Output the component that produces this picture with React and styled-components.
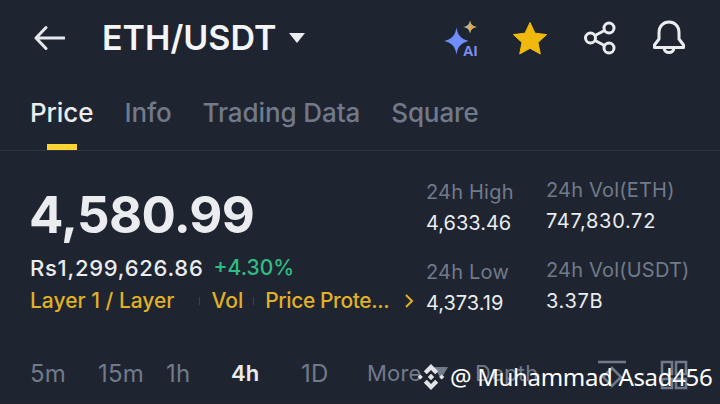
import React from 'react';
import styled, { createGlobalStyle } from 'styled-components';

const Global = createGlobalStyle`
  html, body { margin: 0; padding: 0; background: #1f2530; }
`;
const font = `"Inter", "Liberation Sans", sans-serif`;

const Page = styled.div`
  position: relative; width: 720px; height: 404px; overflow: hidden;
  background: #1f2530; font-family: ${font}; color: #eaecef;
`;
const Header = styled.header`
  display: flex; align-items: center; height: 75px; padding: 0 34px; box-sizing: border-box;
`;
const BackBtn = styled.div`display: flex; width: 68px; flex: none;`;
const Title = styled.h1`
  margin: 0; font-size: 34px; font-weight: 600; letter-spacing: 0; color: #f4f5f7; line-height: 1;
`;
const Caret = styled.svg`margin-left: 12px; flex: none;`;
const Actions = styled.div`
  margin-left: auto; display: flex; align-items: center; gap: 35px;
`;
const AiSvg = styled.svg`margin-right: -5px;`;
const Tabs = styled.nav`
  display: flex; gap: 31px; padding: 0 30px; height: 76px; box-sizing: border-box;
  border-bottom: 1px solid #2f3540;
`;
const Tab = styled.div`
  position: relative; font-size: 26px; line-height: 76px; height: 75px; letter-spacing: -0.1px;
  font-weight: 500; color: ${p => (p.$active ? '#eaecef' : '#717a8a')};
  ${p => p.$active && `
    &::after {
      content: ''; position: absolute; left: 17px; bottom: 0; width: 30px; height: 6px; background: #fcd535;
    }
  `}
`;
const Market = styled.section`
  display: grid; grid-template-columns: 396px 120px 1fr; padding: 0 0 0 30px; height: 198px;
`;
const PriceCol = styled.div`display: flex; flex-direction: column; width: 396px;`;
const BigPrice = styled.div`
  font-size: 51px; font-weight: 700; line-height: 60px; margin-top: 34px; color: #eaecef; letter-spacing: -0.7px; margin-left: -1px;
`;
const FiatRow = styled.div`
  display: flex; gap: 10px; margin-top: 10px; line-height: 26px; font-weight: 500;
`;
const Fiat = styled.span`color: #eaecef; font-size: 22px; letter-spacing: 0.75px;`;
const Change = styled.span`color: #2ebd85; font-size: 21px; letter-spacing: 0;`;
const TagRow = styled.div`
  display: flex; align-items: center; margin-top: 7px; color: #e0b128; font-size: 21px; line-height: 26px; font-weight: 500; white-space: nowrap;
`;
const Tag = styled.span`letter-spacing: ${p => p.$ls || 0}px;`;
const TagSep = styled.i`
  display: block; width: 1px; height: 8px; background: #3a404c; margin: 0 ${p => p.$m}px 0 ${p => p.$l}px;
`;
const Chevron = styled.svg`margin-left: 15px; flex: none;`;
const StatCol = styled.div`
  display: flex; flex-direction: column; padding-top: ${p => p.$top}px;
`;
const StatLabel = styled.div`
  font-size: 20px; line-height: 26px; color: #717a8a; white-space: nowrap; letter-spacing: 0.2px;
`;
const StatValue = styled.div`
  font-size: 20px; line-height: 26px; color: #eaecef; margin-top: 5px; margin-bottom: 23px; white-space: nowrap;
  letter-spacing: ${p => (p.$wide ? 0.7 : 0)}px;
`;
const Frames = styled.div`
  display: flex; align-items: center; height: 48px; padding-left: 30px; letter-spacing: 0.2px;
`;
const Frame = styled.span`
  display: flex; align-items: center; flex: none; width: ${p => p.$w}px; color: ${p => (p.$active ? '#eaecef' : '#717a8a')};
  font-weight: ${p => (p.$active ? 600 : 400)}; font-size: ${p => p.$size || 24}px;
`;
const MoreCaret = styled.svg`margin-left: 12px; flex: none;`;
const FrameIcons = styled.div`display: flex; align-items: center; gap: 33px; margin: 3px 0 0 32px;`;
const Watermark = styled.div`
  position: absolute; left: 417px; top: 362px; display: flex; align-items: center; gap: 5px;
  font-family: "Noto Sans", sans-serif; font-size: 24px; line-height: 30px; color: #fff; white-space: nowrap; letter-spacing: -0.33px;
`;

const Back = () => (
  <svg width="31" height="26" viewBox="0 0 31 26" fill="none" stroke="#e6e8ec" strokeWidth="3" strokeLinecap="round" strokeLinejoin="round">
    <path d="M2 13h28M12 2.500 2 13l10 10.500" />
  </svg>
);
const AiIcon = () => (
  <AiSvg width="40" height="38" viewBox="0 0 40 38">
    <path d="M14.500 8.500c1.500 8 4 11 12 13.500-8 2.500-10.500 5.500-12 13.500-1.500-8-4-11-12-13.500 8-2.500 10.500-5.500 12-13.500z" fill="#6f8dfb" />
    <path d="M28 1.500c.9 4.200 2.500 5.600 7 6.500-4.500.9-6.100 2.300-7 6.500-.9-4.200-2.500-5.600-7-6.500 4.500-.9 6.100-2.300 7-6.500z" fill="#b9b3a0" />
    <path d="M28 1.500c.9 4.200 2.500 5.600 7 6.500-4.500.9-6.100 2.300-7 6.500z" fill="#d9ab4c" />
    <text x="21" y="36.500" fontFamily="Liberation Sans, sans-serif" fontWeight="700" fontSize="14.500" fill="#7f8ff0">AI</text>
  </AiSvg>
);
const Star = () => (
  <svg width="36" height="34" viewBox="0 0 36 34">
    <path d="M18 1.500l5 10.700 11.600 1.400-8.600 7.900 2.300 11.400L18 27.300 7.700 33l2.300-11.500-8.600-7.900 11.600-1.400z" fill="#f0b90b" stroke="#f0b90b" strokeLinejoin="round" />
  </svg>
);
const Share = () => (
  <svg width="34" height="34" viewBox="0 0 34 34" fill="none" stroke="#eaecef" strokeWidth="3">
    <circle cx="7.500" cy="17" r="5" />
    <circle cx="26" cy="7" r="5" />
    <circle cx="26" cy="27" r="5" />
    <path d="M12 14.500l9.500-5M12 19.500l9.500 5" />
  </svg>
);
const Bell = () => (
  <svg width="34" height="36" viewBox="0 0 34 36" fill="none" stroke="#eaecef" strokeWidth="3" strokeLinejoin="round" strokeLinecap="round">
    <path d="M17 2c-6 0-10 4.500-10 10.500v6.500L2.500 25v2.500h29V25L27 19v-6.500C27 6.500 23 2 17 2z" />
    <path d="M12 28c.5 3 2.500 4.500 5 4.500s4.500-1.500 5-4.500" />
  </svg>
);
const BinanceMark = () => (
  <svg width="28" height="28" viewBox="0 0 28 28" fill="#e2e4e8">
    <path d="M14 1l7.200 7.200-3 3L14 7l-4.200 4.200-3-3zM14 27l-7.200-7.200 3-3L14 21l4.200-4.200 3 3zM3.300 11.400 5.900 14l-2.600 2.600L.7 14zM24.700 11.400 27.300 14l-2.600 2.600-2.600-2.600zM14 10.800l3.200 3.200-3.200 3.200-3.200-3.200z" />
  </svg>
);

export default function App() {
  return (
    <Page>
      <Global />
      <Header>
        <BackBtn><Back /></BackBtn>
        <Title>ETH/USDT</Title>
        <Caret width="18" height="12" viewBox="0 0 18 12"><path d="M1 1h16L9 11z" fill="#eaecef" /></Caret>
        <Actions>
          <AiIcon />
          <Star />
          <Share />
          <Bell />
        </Actions>
      </Header>
      <Tabs>
        <Tab $active>Price</Tab>
        <Tab>Info</Tab>
        <Tab>Trading Data</Tab>
        <Tab>Square</Tab>
      </Tabs>
      <Market>
        <PriceCol>
          <BigPrice>4,580.99</BigPrice>
          <FiatRow><Fiat>Rs1,299,626.86</Fiat><Change>+4.30%</Change></FiatRow>
          <TagRow>
            <Tag>Layer 1 / Layer</Tag>
            <TagSep $l={24} $m={12} />
            <Tag>Vol</Tag>
            <TagSep $l={10} $m={11} />
            <Tag $ls={-0.4}>Price Prote...</Tag>
            <Chevron width="11" height="16" viewBox="0 0 11 16" fill="none" stroke="#e0b128" strokeWidth="2"><path d="M2 2l6 6-6 6" /></Chevron>
          </TagRow>
        </PriceCol>
        <StatCol $top={28}>
          <StatLabel>24h High</StatLabel>
          <StatValue>4,633.46</StatValue>
          <StatLabel>24h Low</StatLabel>
          <StatValue>4,373.19</StatValue>
        </StatCol>
        <StatCol $top={26}>
          <StatLabel>24h Vol(ETH)</StatLabel>
          <StatValue $wide>747,830.72</StatValue>
          <StatLabel>24h Vol(USDT)</StatLabel>
          <StatValue $wide>3.37B</StatValue>
        </StatCol>
      </Market>
      <Frames>
        <Frame $w={68}>5m</Frame>
        <Frame $w={68}>15m</Frame>
        <Frame $w={65}>1h</Frame>
        <Frame $w={70} $size={22} $active>4h</Frame>
        <Frame $w={66}>1D</Frame>
        <Frame $w={108} $size={22}>
          More
          <MoreCaret width="14" height="12" viewBox="0 0 14 12"><path d="M0 0h14L7 12z" fill="#717a8a" /></MoreCaret>
        </Frame>
        <Frame $w={90} $size={22}>Depth</Frame>
        <FrameIcons>
          <svg width="30" height="30" viewBox="0 0 30 30" fill="none" stroke="#717a8a" strokeWidth="2.500"><path d="M1 2h28M15 8l9 9-9 9-9-9z" /></svg>
          <svg width="28" height="30" viewBox="0 0 28 30" fill="none" stroke="#717a8a" strokeWidth="2.500"><path d="M2 2h10v12H2zM16 2h10v12H16zM2 19h10v9H2zM16 19h10v9H16z" /></svg>
        </FrameIcons>
      </Frames>
      <Watermark>
        <BinanceMark />
        <span>@ Muhammad Asad456</span>
      </Watermark>
    </Page>
  );
}
